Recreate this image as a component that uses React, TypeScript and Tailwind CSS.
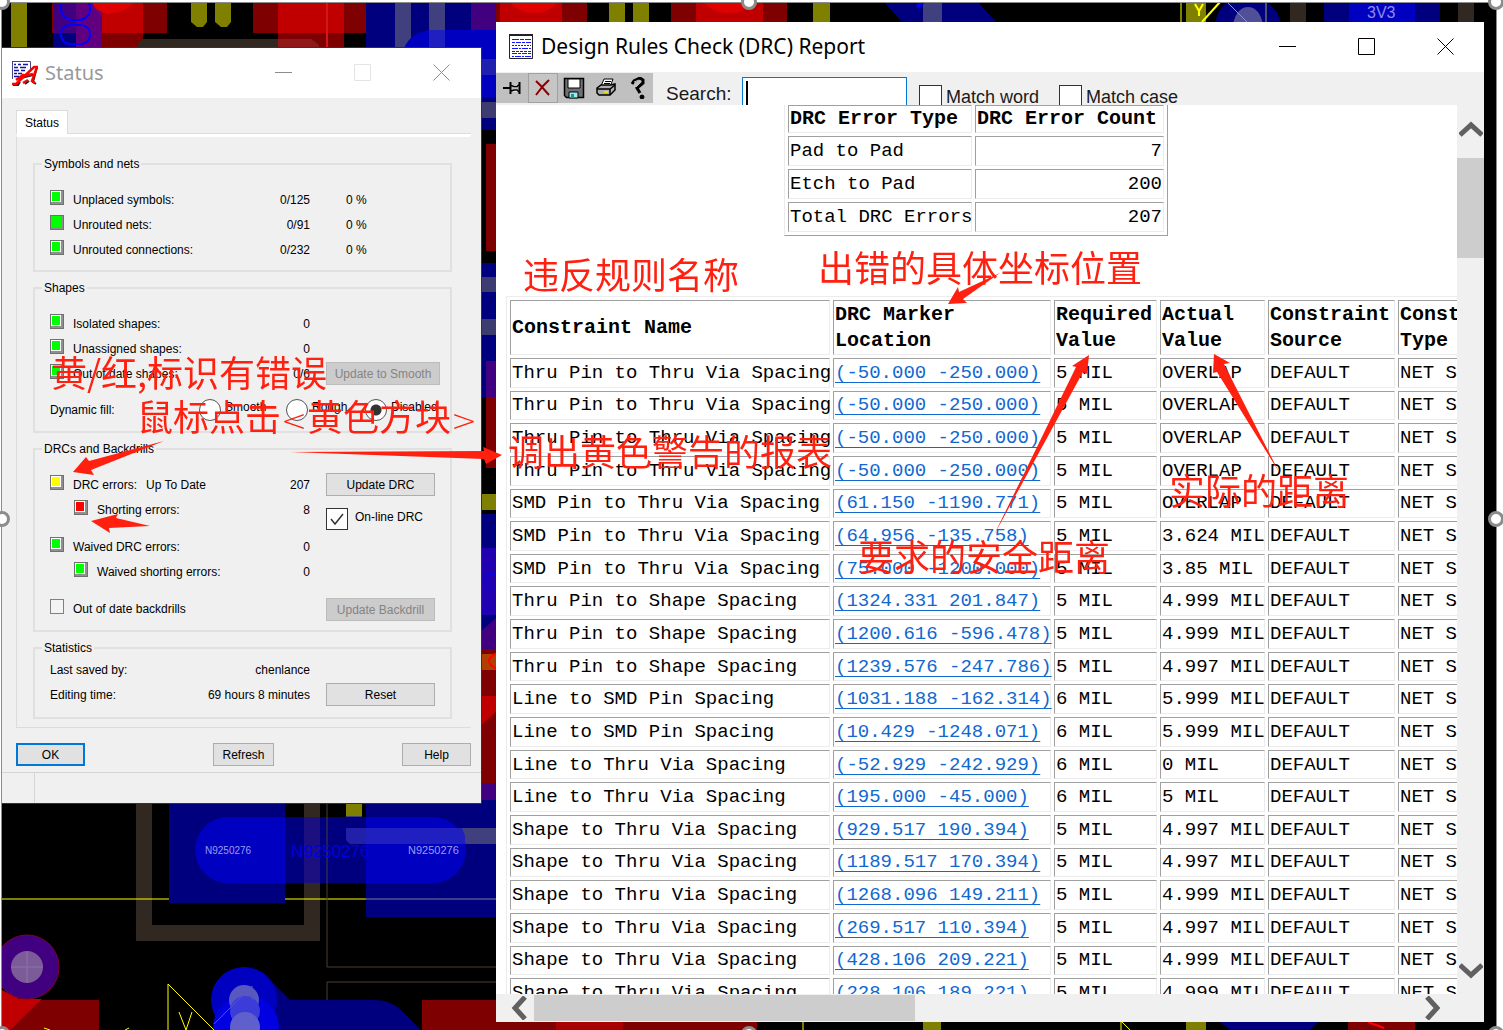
import { ReactNode } from "react";

type Led = "green" | "flat" | "yellow" | "red";

const LED_COLORS: Record<Led, string> = {
  green: "bg-[#00ff00] border-white",
  flat: "bg-[#00ff00] border-[#00ff00]",
  yellow: "bg-[#ffff00] border-white",
  red: "bg-[#ff0000] border-white",
};

const ERROR_COUNTS = [
  ["Pad to Pad", "7"],
  ["Etch to Pad", "200"],
  ["Total DRC Errors", "207"],
];

const DRC_ROWS = [
  ["Thru Pin to Thru Via Spacing", "(-50.000 -250.000)", "5 MIL", "OVERLAP"],
  ["Thru Pin to Thru Via Spacing", "(-50.000 -250.000)", "5 MIL", "OVERLAP"],
  ["Thru Pin to Thru Via Spacing", "(-50.000 -250.000)", "5 MIL", "OVERLAP"],
  ["Thru Pin to Thru Via Spacing", "(-50.000 -250.000)", "5 MIL", "OVERLAP"],
  ["SMD Pin to Thru Via Spacing", "(61.150 -1190.771)", "5 MIL", "OVERLAP"],
  ["SMD Pin to Thru Via Spacing", "(64.956 -135.758)", "5 MIL", "3.624 MIL"],
  ["SMD Pin to Thru Via Spacing", "(75.000 -1200.000)", "5 MIL", "3.85 MIL"],
  ["Thru Pin to Shape Spacing", "(1324.331 201.847)", "5 MIL", "4.999 MIL"],
  ["Thru Pin to Shape Spacing", "(1200.616 -596.478)", "5 MIL", "4.999 MIL"],
  ["Thru Pin to Shape Spacing", "(1239.576 -247.786)", "5 MIL", "4.997 MIL"],
  ["Line to SMD Pin Spacing", "(1031.188 -162.314)", "6 MIL", "5.999 MIL"],
  ["Line to SMD Pin Spacing", "(10.429 -1248.071)", "6 MIL", "5.999 MIL"],
  ["Line to Thru Via Spacing", "(-52.929 -242.929)", "6 MIL", "0 MIL"],
  ["Line to Thru Via Spacing", "(195.000 -45.000)", "6 MIL", "5 MIL"],
  ["Shape to Thru Via Spacing", "(929.517 190.394)", "5 MIL", "4.997 MIL"],
  ["Shape to Thru Via Spacing", "(1189.517 170.394)", "5 MIL", "4.997 MIL"],
  ["Shape to Thru Via Spacing", "(1268.096 149.211)", "5 MIL", "4.999 MIL"],
  ["Shape to Thru Via Spacing", "(269.517 110.394)", "5 MIL", "4.997 MIL"],
  ["Shape to Thru Via Spacing", "(428.106 209.221)", "5 MIL", "4.999 MIL"],
  ["Shape to Thru Via Spacing", "(228.106 189.221)", "5 MIL", "4.999 MIL"],
];

const CELL =
  "border border-t-[#a0a0a0] border-l-[#a0a0a0] border-r-[#ececec] border-b-[#ececec] px-px py-0 whitespace-nowrap";

/* ---------- board behind the windows ---------- */

const Board = () => (
  <svg className="absolute inset-0 h-full w-full" aria-hidden="true">
    <rect width="100%" height="100%" fill="#000" />
    {/* top strip */}
    <rect x="11" y="0" width="16" height="50" fill="#7f7f00" />
    <rect x="52" y="0" width="115" height="33" fill="#7f0000" />
    <rect x="53" y="0" width="49" height="33" fill="#40007f" />
    <rect x="53" y="33" width="49" height="20" fill="#00007f" />
    <rect x="76" y="0" width="26" height="50" fill="#60007f" />
    <rect x="102" y="0" width="41" height="33" fill="#c00000" />
    <rect x="102" y="33" width="41" height="20" fill="#7f0000" />
    <path d="M92 0h44q-10 13-26 13t-18-13z" fill="#e00000" />
    <g fill="none" stroke="#0000ff" strokeWidth="2">
      <rect x="61" y="-4" width="29" height="24" rx="11" />
      <rect x="61" y="25" width="29" height="19" rx="9" />
    </g>
    <path d="M191 0h16v22l-4 5h-6l-6-5zM215 0h16v22l-4 5h-6l-6-5z" fill="#7f7f00" />
    <rect x="253" y="0" width="115" height="33" fill="#7f0000" />
    <rect x="278" y="0" width="66" height="33" fill="#c00000" />
    <rect x="278" y="33" width="66" height="20" fill="#7f0000" />
    <path d="M136 50l3-8 4-3h170l6 6v10h-183z" fill="#322822" />
    <path d="M278 39h33l8 6v10h-41z" fill="#901818" />
    <rect x="326" y="0" width="2" height="50" fill="#d01818" />
    <rect x="366" y="0" width="130" height="130" fill="#00007f" />
    <rect x="395" y="0" width="16" height="50" fill="#40407f" />
    <rect x="429" y="0" width="16" height="50" fill="#40407f" />
    <rect x="471" y="0" width="25" height="33" fill="#40007f" />
    <path d="M403 50q8-20 32-20h61v67h-60z" fill="#0000c0" />
    <rect x="429" y="30" width="16" height="20" fill="#2020c0" />
    {/* sliver between the two windows */}
    <rect x="480" y="59" width="16" height="16" fill="#2020b0" />
    <rect x="480" y="102" width="16" height="16" fill="#3c3c70" />
    <rect x="486" y="144" width="10" height="107" fill="#7f0000" />
    <rect x="480" y="263" width="16" height="134" fill="#00007f" />
    <rect x="480" y="277" width="16" height="15" fill="#3c3c70" />
    <rect x="480" y="319" width="16" height="16" fill="#3c3c70" />
    <rect x="486" y="361" width="10" height="36" fill="#40007f" />
    <rect x="486" y="397" width="10" height="71" fill="#7f0000" />
    <rect x="480" y="494" width="16" height="16" fill="#7f7f00" />
    <rect x="480" y="514" width="16" height="122" fill="#00007f" />
    <rect x="480" y="548" width="16" height="67" fill="#2000b0" />
    <circle cx="492" cy="581" r="7" fill="none" stroke="#0000ff" />
    <path d="M480 632l16-14v31h-16z" fill="#40007f" />
    <rect x="480" y="649" width="16" height="134" fill="#7f0000" />
    <rect x="480" y="654" width="16" height="16" fill="#b04000" />
    <path d="M497 653q-16 8 0 16" fill="none" stroke="#ff0000" strokeWidth="2" />
    <path d="M480 696h16v16l-16 14z" fill="#c00000" />
    <rect x="480" y="783" width="16" height="20" fill="#40007f" />
    {/* top strip over the report window */}
    <rect x="496" y="0" width="91" height="24" fill="#7f0000" />
    <rect x="500" y="0" width="62" height="24" fill="#c00000" />
    <path d="M508 0h52q-10 13-26 13t-26-13z" fill="#e00000" />
    <path d="M609 0h16v24h-16zM633 0h16v24h-16zM813 0h17v24h-17z" fill="#7f7f00" />
    <rect x="671" y="0" width="116" height="24" fill="#7f0000" />
    <rect x="696" y="0" width="67" height="24" fill="#c00000" />
    <path d="M702 0h54q-10 13-27 13t-27-13z" fill="#e00000" />
    <path d="M884 2h94l18 20h-94z" fill="#00007f" />
    <rect x="923" y="2" width="19" height="20" fill="#40407f" />
    <path d="M917 7l7-6" stroke="#0000ff" strokeWidth="4" />
    <path d="M1181 2v22" stroke="#ffff00" />
    <rect x="1186" y="2" width="20" height="22" fill="#7f7f00" />
    <path d="M1195 4l4 7 4-7M1199 11v5M1202 22l18-20" fill="none" stroke="#ffff00" strokeWidth="2" />
    <path d="M1215 24q4-22 20-24h24q18 4 22 24z" fill="#00007f" />
    <path d="M1233 24q4-17 15-17t15 17z" fill="#505098" />
    <path d="M1227 2l20 20M1266 2v22" stroke="#a0a060" />
    <path d="M1290 0h16v24h-16zM1458 0h16v24h-16z" fill="#322822" />
    <rect x="1324" y="0" width="116" height="24" fill="#00007f" />
    <rect x="1349" y="0" width="66" height="24" fill="#0000c0" />
    <text x="1367" y="18" fontSize="16" fill="#8c8ce8" fontFamily="Liberation Sans, sans-serif">3V3</text>
    {/* area under the status window */}
    <path d="M144 800v133h168V800" fill="none" stroke="#322822" strokeWidth="16" />
    <rect x="169" y="800" width="116" height="103" fill="#00007f" />
    <path d="M354 816v20h144" fill="none" stroke="#40407f" strokeWidth="16" />
    <rect x="346" y="800" width="16" height="16" fill="#7f7f00" />
    <path d="M0 899h169M285 899h81" stroke="#ffff00" />
    <rect x="366" y="800" width="130" height="117" fill="#00007f" />
    <path d="M362 836h134" stroke="#40407f" strokeWidth="16" />
    <path d="M366 899h130" stroke="#7f7f9c" />
    <path d="M285 817H228a33 33 0 0 0 0 66h57zM366 817h67a33 33 0 0 1 0 66h-67z" fill="#0000c0" />
    <rect x="285" y="817" width="81" height="66" fill="#00007f" />
    <rect x="304" y="817" width="16" height="66" fill="#1c1080" />
    <path d="M346 828h20v16h-16l-4-4z" fill="#2020a8" />
    <path d="M366 828h96l3 8v8h-99z" fill="#2020c0" />
    <path d="M327 803v164h169M496 982H327v48" fill="none" stroke="#4a3c32" />
    <g fontFamily="Liberation Sans, sans-serif" fill="#9c9cf0">
      <text x="205" y="854" fontSize="10">N9250276</text>
      <text x="408" y="854" fontSize="11">N9250276</text>
      <text x="291" y="857" fontSize="17" fill="#0000e0">N9250276</text>
    </g>
    <rect x="0" y="1000" width="99" height="30" fill="#7f0000" />
    <path d="M0 989l20 10h22l-32 31H0z" fill="#c00000" />
    <circle cx="27" cy="967" r="32" fill="#40007f" stroke="#7f0030" />
    <circle cx="27" cy="967" r="16" fill="#7c5c98" />
    <path d="M27 951v32M11 967h32" stroke="#8c70a8" />
    <path d="M262 972l28 28h86q14 0 25 10l20 20H240z" fill="#00007f" />
    <circle cx="244" cy="1000" r="33" fill="#0000c0" />
    <circle cx="246" cy="1028" r="33" fill="#0000e0" />
    <circle cx="244" cy="1000" r="15" fill="#5858c0" />
    <circle cx="245" cy="1011" r="15" fill="#3c3cd8" />
    <circle cx="245" cy="1027" r="15" fill="#6060cc" />
    <path d="M168 1030v-46l46 46M179 1012l7 18 6-18M44 1028l6 2M125 1030l4-2" fill="none" stroke="#ffff00" />
    <path d="M214 1024l38-38v14" fill="none" stroke="#5858a8" />
    <rect x="422" y="1000" width="335" height="30" fill="#7f0000" />
    <rect x="556" y="1022" width="67" height="8" fill="#a80000" />
    <path d="M803 1022v8" stroke="#ffff00" />
    <rect x="923" y="1022" width="18" height="8" fill="#7f7f00" />
    <path d="M1121 1022v8M1122 1022l8 8" stroke="#ffff00" />
    <rect x="1186" y="1022" width="20" height="8" fill="#7f7f00" />
    <path d="M1220 1022h98l-8 8h-80z" fill="#00007f" />
    <rect x="1348" y="1022" width="67" height="8" fill="#7f0000" />
    <path d="M1368 1022l16 6" stroke="#ff0000" strokeWidth="2" />
  </svg>
);

/* ---------- window chrome ---------- */

const WindowButtons = ({ muted = false }: { muted?: boolean }) => (
  <div className={`flex items-center gap-[43px] ${muted ? "text-[#8c8c8c]" : "text-black"}`}>
    <button aria-label="Minimize" className="p-[9px]">
      <svg width="18" height="18" fill="none" stroke="currentColor">
        <path d="M0 8.500h17" />
      </svg>
    </button>
    <button aria-label="Maximize" className={`p-[9px] ${muted ? "text-[#e4e4e4]" : ""}`}>
      <svg width="18" height="18" fill="none" stroke="currentColor">
        <path d="M.5 .5h16v16H.5z" />
      </svg>
    </button>
    <button aria-label="Close" className="p-[9px]">
      <svg width="18" height="18" fill="none" stroke="currentColor">
        <path d="M.5 .5l16 16M16.500 .5l-16 16" />
      </svg>
    </button>
  </div>
);

const AllegroIcon = () => (
  <svg width="26" height="26" viewBox="0 0 26 26" aria-hidden="true">
    <path d="M0 1h18v17H0z" fill="#fff" />
    <path d="M0 1.500h18.500V12M.5 1v18" fill="none" stroke="#444480" />
    <path
      d="M2 4.500h2M6 4.500h3M11 4.500h5M2 7.500h4M8 7.500h6M2 10.500h5M9 10.500h4M2 13.500h3M6 13.500h4M2 16.500h5"
      stroke="#1414a0"
      strokeWidth="1.500"
    />
    <path d="M1 25h5l2-3M25 7l-4 15 3 2M9 18l12-3M13 24l4-3" fill="none" stroke="#222" strokeWidth="2" />
    <path d="M0 24h4L22 7h3l-5 14 3 2M8 17l13-3M4 20l7-5 3 1M11 23l5-3" fill="none" stroke="#ff0000" strokeWidth="2.500" />
  </svg>
);

const ReportIcon = () => (
  <svg width="26" height="26" viewBox="0 0 26 26" aria-hidden="true">
    <path d="M1.500 .5h23v24h-23z" fill="#fff" stroke="#222" />
    <path d="M1 1h24" stroke="#222" strokeWidth="2" />
    <g stroke="#1414ff">
      <path d="M4 5.500h19" strokeDasharray="7 1 4 1" />
      <path d="M4 8.500h19" strokeDasharray="3 1 5 1" />
      <path d="M4 11.500h19" strokeDasharray="2 1" />
      <path d="M4 14.500h19" strokeDasharray="6 1 2 1" />
      <path d="M4 17.500h19" strokeDasharray="3 1" />
      <path d="M4 19.500h19" strokeDasharray="5 1 3 1" />
      <path d="M4 22.500h19" strokeDasharray="2 1 6 1" />
    </g>
  </svg>
);

/* ---------- status window ---------- */

const Indicator = ({ color, label }: { color: Led; label: string }) => (
  <button aria-label={label} className="mb-1 h-[15px] w-3.5 shrink-0 border border-[#707070] bg-[#909090] pr-0.5 pb-0.5">
    <span className={`block h-full w-full border ${LED_COLORS[color]}`} />
  </button>
);

type StatProps = { color: Led; label: string; value?: string; percent?: string; note?: string; indent?: boolean };

const Stat = ({ color, label, value, percent, note, indent }: StatProps) => (
  <div className="flex h-[25px] items-center">
    <div className={`flex w-[260px] items-center gap-[9px] ${indent ? "pl-6" : ""}`}>
      <Indicator color={color} label={label} />
      <span>{label}</span>
      {note && <span>{note}</span>}
      <span className="ml-auto">{value}</span>
    </div>
    {percent && <span className="ml-9">{percent}</span>}
  </div>
);

const Group = ({ title, children, className = "" }: { title: string; children: ReactNode; className?: string }) => (
  <fieldset className={`min-w-0 border-2 border-[#e0e0e0] pl-[15px] ${className}`}>
    <legend className="-ml-2 px-0.5 leading-[18px]">{title}</legend>
    {children}
  </fieldset>
);

const PushButton = ({ children, className = "", disabled = false }: { children: ReactNode; className?: string; disabled?: boolean }) => (
  <button
    disabled={disabled}
    className={`h-[23px] border leading-5 ${disabled ? "border-[#bcbcbc] bg-[#cccccc] text-[#848484]" : "border-[#adadad] bg-[#e1e1e1]"} ${className}`}
  >
    {children}
  </button>
);

const FillOption = ({ label, className, defaultChecked }: { label: string; className: string; defaultChecked?: boolean }) => (
  <label className={`flex items-start gap-1 leading-4 ${className}`}>
    <input
      type="radio"
      name="dynamic-fill"
      defaultChecked={defaultChecked}
      className="h-[22px] w-[22px] shrink-0 appearance-none rounded-full border border-[#555] bg-white checked:bg-[radial-gradient(circle,#333_5px,#fff_6px)]"
    />
    {label}
  </label>
);

const StatusWindow = () => (
  <section className="absolute top-12 left-0.5 flex w-[479px] flex-col bg-[#f0f0f0] text-[12px] shadow-[0_0_0_1px_#333]">
    <header className="flex h-[50px] items-center bg-white pr-[21px] pl-2.5">
      <AllegroIcon />
      <h1 className="ml-[7px] flex-1 font-['Noto_Sans'] text-[20px] text-[#999]">Status</h1>
      <WindowButtons muted />
    </header>

    <div className="px-3.5 pr-2.5 pt-3">
      <div role="tablist" className="flex items-end">
        <button role="tab" aria-selected="true" className="h-6 w-[52px] border border-b-0 border-[#dcdcdc] bg-white text-center">
          Status
        </button>
        <div className="flex-1 border-t border-[#dcdcdc]" />
      </div>
      <div className="flex flex-col gap-[7px] border-t-[3px] border-r border-b border-l border-t-white border-r-transparent border-b-[#dcdcdc] border-l-[#dcdcdc] pt-[18px] pr-[18px] pb-2 pl-4">
        <Group title="Symbols and nets" className="h-[117px] pt-3.5">
          <Stat color="green" label="Unplaced symbols:" value="0/125" percent="0 %" />
          <Stat color="flat" label="Unrouted nets:" value="0/91" percent="0 %" />
          <Stat color="green" label="Unrouted connections:" value="0/232" percent="0 %" />
        </Group>

        <Group title="Shapes" className="h-[154px] pt-3.5">
          <Stat color="green" label="Isolated shapes:" value="0" />
          <Stat color="green" label="Unassigned shapes:" value="0" />
          <div className="flex items-center gap-4">
            <Stat color="green" label="Out of date shapes:" value="0/6" />
            <PushButton disabled className="w-[114px]">Update to Smooth</PushButton>
          </div>
          <div className="flex h-12 items-center">
            <span className="w-[149px]">Dynamic fill:</span>
            <FillOption label="Smooth" className="w-[87px]" />
            <FillOption label="Rough" className="w-[79px]" />
            <FillOption label="Disabled" className="" defaultChecked />
          </div>
        </Group>

        <Group title="DRCs and Backdrills" className="h-[192px] pt-3.5">
          <div className="flex gap-4">
            <div>
              <Stat color="yellow" label="DRC errors:" note="Up To Date" value="207" />
              <Stat color="red" label="Shorting errors:" value="8" indent />
              <div className="h-3" />
              <Stat color="green" label="Waived DRC errors:" value="0" />
              <Stat color="green" label="Waived shorting errors:" value="0" indent />
              <label className="mt-3 flex h-[25px] items-center gap-[9px]">
                <input type="checkbox" className="mb-1 h-[15px] w-3.5 appearance-none border border-[#808080] bg-[#f4f4f4]" />
                Out of date backdrills
              </label>
            </div>
            <div className="flex flex-col items-start pt-px">
              <PushButton className="w-[109px]">Update DRC</PushButton>
              <label className="relative mt-3 flex items-start gap-[7px] leading-[18px]">
                <input type="checkbox" defaultChecked className="peer h-[22px] w-[22px] appearance-none border border-[#333] bg-white" />
                <svg className="pointer-events-none absolute top-0 left-0 hidden peer-checked:block" width="22" height="22" fill="none">
                  <path d="M5 11l4 5 8-10" stroke="#333" strokeWidth="1.500" />
                </svg>
                On-line DRC
              </label>
              <PushButton disabled className="mt-auto w-[109px]">Update Backdrill</PushButton>
            </div>
          </div>
        </Group>

        <Group title="Statistics" className="h-[80px]">
          <div className="flex h-[25px] w-[260px] items-center justify-between">
            <span>Last saved by:</span>
            <span>chenlance</span>
          </div>
          <div className="flex h-[25px] items-center gap-4">
            <div className="flex w-[260px] justify-between">
              <span>Editing time:</span>
              <span>69 hours 8 minutes</span>
            </div>
            <PushButton className="w-[109px]">Reset</PushButton>
          </div>
        </Group>
      </div>
    </div>

    <div className="flex justify-between px-3.5 pr-2.5 pt-[15px] pb-1.5">
      <button className="h-[23px] w-[69px] border-2 border-[#0078d7] bg-[#e1e1e1] leading-[18px]">OK</button>
      <PushButton className="w-[61px]">Refresh</PushButton>
      <PushButton className="w-[69px]">Help</PushButton>
    </div>
    <footer className="flex h-[31px] border-t border-[#d4d4d4]">
      <div className="w-[33px] border-r border-[#d4d4d4]" />
    </footer>
  </section>
);

/* ---------- report window ---------- */

const Toolbar = () => (
  <div className="flex h-[33px] shrink-0 items-start overflow-clip bg-[#f0f0f0] text-[19px] text-[#1a1a1a]">
    <div className="mt-px flex h-[30px] items-center bg-[#c0c0c0]">
      <button aria-label="Pin" className="flex h-full w-8 items-center justify-center">
        <svg width="18" height="16" fill="none" stroke="#000">
          <path d="M0 8h7" strokeWidth="2" />
          <path d="M7.500 2v12M16.500 2v12" strokeWidth="2" />
          <path d="M8 5.500l3 1h3l2-2M8 11l3-1h3l2 2" fill="#fff" strokeWidth="1.500" />
        </svg>
      </button>
      <button aria-label="Close report" className="flex h-full w-[30px] items-center justify-center border border-[#a0a0a0] bg-[#c6c6c6]">
        <svg width="16" height="18" fill="none" stroke="#8b0000" strokeWidth="2">
          <path d="M1 2l5 5 8 9M14 1L8 7l-7 9" />
        </svg>
      </button>
      <button aria-label="Save" className="flex h-full w-8 items-center justify-center">
        <svg width="22" height="22">
          <path d="M1.500 1.500h19v19h-17l-2-2z" fill="#707070" stroke="#000" strokeWidth="1.500" />
          <path d="M5 2h12v9H5z" fill="#fff" stroke="#000" />
          <path d="M6 15h9v6H6z" fill="#a0e8f0" stroke="#000" />
          <path d="M8 17h3v4H8z" fill="#00a0a0" />
        </svg>
      </button>
      <button aria-label="Print" className="flex h-full w-8 items-center justify-center">
        <svg width="20" height="20" fill="none" stroke="#000">
          <path d="M5 8l3-7h9l-3 8z" fill="#fff" />
          <path d="M9 3.500h6M8 5.500h6" />
          <path d="M1 10l4-3h10l4-1v6l-5 5H3l-2-2z" fill="#b0b0b0" strokeWidth="1.500" />
          <path d="M1 11h13l5-4M14 11v6" strokeWidth="1.500" />
          <path d="M8 14h4" stroke="#e8e000" strokeWidth="2" />
        </svg>
      </button>
      <button aria-label="Help" className="flex h-full w-[31px] items-center justify-center">
        <svg width="18" height="22" fill="none" stroke="#000">
          <path d="M3 7l2-3 6-3 3 2v3l-6 5 3 5" strokeWidth="3" />
          <path d="M5 5l5-2M11 6l-4 4" stroke="#c0c0c0" />
          <circle cx="13" cy="20" r="2" fill="#000" />
        </svg>
      </button>
    </div>
    <label htmlFor="search" className="mt-2 ml-[13px] w-[76px] leading-7">Search:</label>
    <div className="relative mt-[5px]">
      <input id="search" autoFocus className="h-9 w-[165px] border border-[#0078d7] bg-white px-1 caret-transparent outline-none" />
      <span className="absolute top-1 left-1 h-7 w-0.5 bg-black" />
    </div>
    <label className="mt-[13px] ml-3 flex gap-1 leading-6">
      <input type="checkbox" className="h-[23px] w-[23px] appearance-none border border-[#333] bg-white" />
      <span className="text-[18px]">Match word</span>
    </label>
    <label className="mt-[13px] ml-5 flex gap-1 leading-6">
      <input type="checkbox" className="h-[23px] w-[23px] appearance-none border border-[#333] bg-white" />
      <span className="text-[18px]">Match case</span>
    </label>
  </div>
);

const Chevron = ({ d }: { d: string }) => (
  <svg width="24" height="24" viewBox="0 0 24 24" fill="none" stroke="#606060" strokeWidth="5">
    <path d={d} />
  </svg>
);

const ReportWindow = () => (
  <section className="absolute top-[22px] right-[19px] bottom-2 left-[496px] flex flex-col bg-white">
    <header className="flex h-[50px] shrink-0 items-center pr-5 pl-3">
      <ReportIcon />
      <h1 className="ml-[7px] flex-1 font-['Noto_Sans'] text-[21px] text-black">Design Rules Check (DRC) Report</h1>
      <WindowButtons />
    </header>
    <Toolbar />

    <div className="flex min-h-0 flex-1">
      <div className="min-w-0 flex-1 overflow-hidden font-['Liberation_Mono',monospace] text-[19px] leading-[26px] text-black">
        <table className="-mt-1 ml-72 h-[135px] w-[384px] table-fixed border-separate border-spacing-[3px] border border-t-[#ececec] border-r-[#a0a0a0] border-b-[#a0a0a0] border-l-[#ececec]">
          <colgroup>
            <col className="w-[184px]" />
            <col />
          </colgroup>
          <thead>
            <tr className="text-left text-[20px]">
              <th className={CELL}>DRC Error Type</th>
              <th className={CELL}>DRC Error Count</th>
            </tr>
          </thead>
          <tbody>
            {ERROR_COUNTS.map(([type, count]) => (
              <tr key={type}>
                <td className={CELL}>{type}</td>
                <td className={`${CELL} text-right`}>{count}</td>
              </tr>
            ))}
          </tbody>
        </table>

        <table className="mt-[60px] ml-2.5 h-[716px] w-[1080px] table-fixed border-separate border-spacing-[3px] border border-[#ececec]">
          <colgroup>
            <col className="w-[320px]" />
            <col className="w-[218px]" />
            <col className="w-[103px]" />
            <col className="w-[105px]" />
            <col className="w-[127px]" />
            <col />
          </colgroup>
          <thead>
            <tr className="h-[55px] text-left text-[20px]">
              <th className={CELL}>Constraint Name</th>
              <th className={CELL}>DRC Marker<br />Location</th>
              <th className={CELL}>Required<br />Value</th>
              <th className={CELL}>Actual<br />Value</th>
              <th className={CELL}>Constraint<br />Source</th>
              <th className={CELL}>Constraint<br />Type</th>
            </tr>
          </thead>
          <tbody>
            {DRC_ROWS.map(([name, location, required, actual], i) => (
              <tr key={i}>
                <td className={CELL}>{name}</td>
                <td className={CELL}>
                  <a href="#" className="text-[#1068d0] underline underline-offset-4">{location}</a>
                </td>
                <td className={CELL}>{required}</td>
                <td className={CELL}>{actual}</td>
                <td className={CELL}>DEFAULT</td>
                <td className={CELL}>NET SPACING</td>
              </tr>
            ))}
          </tbody>
        </table>
      </div>

      <div className="flex w-[27px] shrink-0 flex-col items-center bg-[#f0f0f0] pt-3">
        <button aria-label="Scroll up"><Chevron d="M1 18l11-10 11 10" /></button>
        <div className="mt-[17px] h-[100px] w-full bg-[#cdcdcd]" />
        <button aria-label="Scroll down" className="mt-auto pb-3"><Chevron d="M1 7l11 10 11-10" /></button>
      </div>
    </div>

    <div className="flex h-[28px] shrink-0 items-center bg-[#f0f0f0] pr-10 pl-3">
      <button aria-label="Scroll left"><Chevron d="M17 1L7 12l10 11" /></button>
      <div className="ml-0.5 h-[26px] w-[381px] bg-[#cdcdcd]" />
      <button aria-label="Scroll right" className="ml-auto"><Chevron d="M7 1l10 11L7 23" /></button>
    </div>
  </section>
);

/* ---------- red mark-up on top ---------- */

const NOTE = "absolute whitespace-nowrap text-[36px] leading-[44px]";
const BRACKET = "font-['DejaVu_Sans'] text-[31px] font-extralight";

const Annotations = () => (
  <div className="pointer-events-none absolute inset-0 font-['Noto_Sans_CJK_SC',sans-serif] text-[#ff2010]">
    <p className={`${NOTE} top-[349px] left-[51px]`}>黄/红,标识有错误</p>
    <p className={`${NOTE} top-[393px] left-[137px]`}>
      鼠标点击<span className={BRACKET}>&lt;</span>黄色方块<span className={BRACKET}>&gt;</span>
    </p>
    <p className={`${NOTE} top-[428px] left-[508px]`}>调出黄色警告的报表</p>
    <p className={`${NOTE} top-[251px] left-[523px]`}>违反规则名称</p>
    <p className={`${NOTE} top-[244px] left-[818px]`}>出错的具体坐标位置</p>
    <p className={`${NOTE} top-[533px] left-[858px]`}>要求的安全距离</p>
    <p className={`${NOTE} top-[467px] left-[1169px]`}>实际的距离</p>
    <svg className="absolute inset-0 h-full w-full" fill="#ff2010" aria-hidden="true">
      <path d="M164 441L89 461l-3-4-13 15 21 3-3-5z" />
      <path d="M290 452l194-1-1-4 19 8-16 9-2-5z" />
      <path d="M150 526l-34-8 2-4-27 7 19 12-1-5z" />
      <path d="M1000 273l-41 19-1-5-10 17 19-1-4-4z" />
      <path d="M994 535l82-168-4-1 17-11-2 19-4-2z" />
      <path d="M1279 472l-62-100-4 1 1-19 16 9-6 1z" />
    </svg>
  </div>
);

const HANDLE = "absolute h-4 w-4 rounded-full border-[3px] border-[#8c8c8c] bg-white";

const SelectionFrame = () => (
  <div className="pointer-events-none absolute inset-0 overflow-hidden">
    <div className="absolute inset-0 border-t-2 border-r-[6px] border-l border-white" />
    <div className="absolute top-0.5 right-1.5 bottom-0 left-px border-t border-r border-l border-[#8c8c8c]" />
    <div className={`${HANDLE} -top-1.5 -left-1.5`} />
    <div className={`${HANDLE} -top-1.5 left-1/2 -ml-[11px]`} />
    <div className={`${HANDLE} -top-1.5 -right-px`} />
    <div className={`${HANDLE} top-1/2 -left-1.5 -mt-1`} />
    <div className={`${HANDLE} top-1/2 -right-px -mt-1`} />
    <div className={`${HANDLE} -bottom-3 -left-1.5`} />
    <div className={`${HANDLE} -bottom-3 left-1/2 -ml-[11px]`} />
    <div className={`${HANDLE} -right-px -bottom-3`} />
  </div>
);

export default function App() {
  return (
    <main className="relative h-screen w-full overflow-hidden bg-black font-['Liberation_Sans',Arial,sans-serif]">
      <Board />
      <StatusWindow />
      <ReportWindow />
      <SelectionFrame />
      <Annotations />
    </main>
  );
}
